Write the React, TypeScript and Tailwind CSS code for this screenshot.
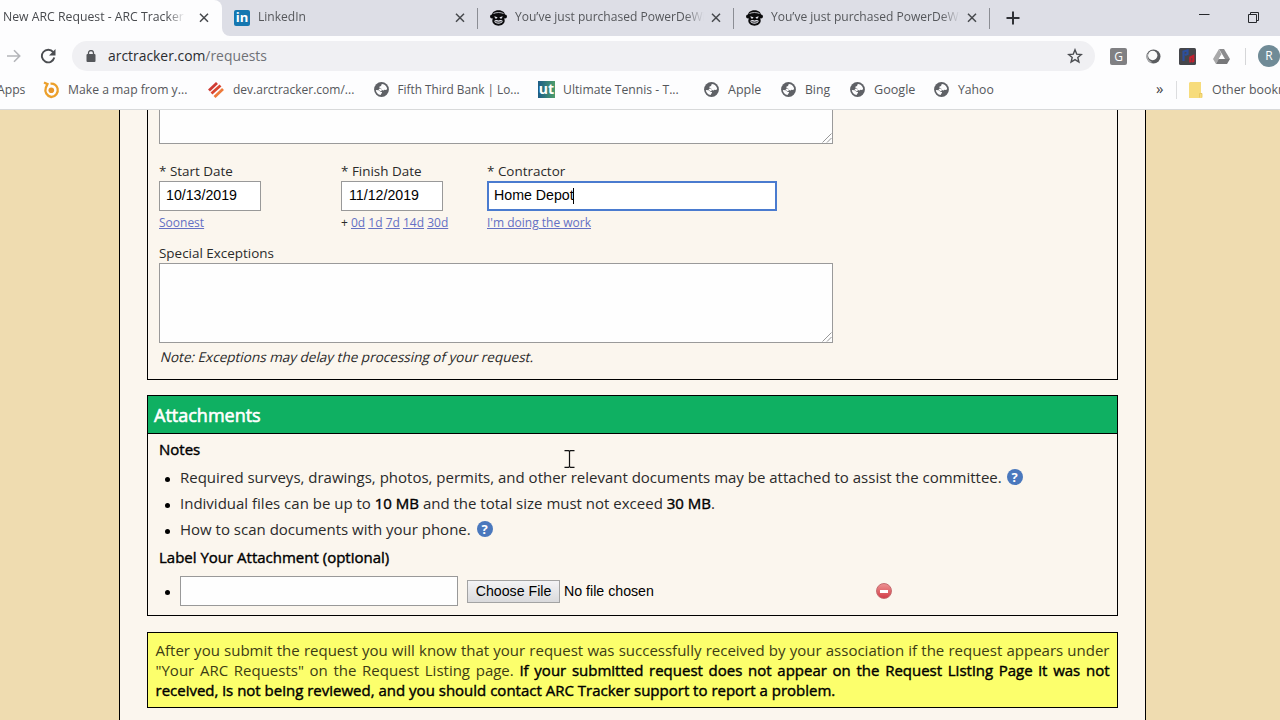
import type { ReactNode } from "react";

function CloseIcon() {
  return (
    <svg className="w-[10px] h-[10px] shrink-0" viewBox="0 0 10 10" fill="none" stroke="#46484c" strokeWidth="1.5" aria-hidden="true">
      <path d="M1 .7l8 8M9 .7L1 8.700" />
    </svg>
  );
}

function MonkeyIcon() {
  return (
    <svg className="w-[17px] h-[16px] shrink-0" viewBox="0 0 17 16" aria-hidden="true">
      <circle cx="2" cy="6.6" r="2" fill="#0b0b0d" />
      <circle cx="15" cy="6.6" r="2" fill="#0b0b0d" />
      <path d="M8.5 0.2C4.2 0.2 1.9 2.6 1.9 5.6c0 1.5.4 2.4.9 3.2-.4.8-.5 1.4-.5 2 0 3 3 4.9 6.2 4.9s6.200-1.900 6.200-4.900c0-.6-.1-1.200-.5-2 .5-.8.900-1.700.900-3.200C15.100 2.600 12.800.2 8.500.2z" fill="#0b0b0d" />
      <path d="M3.500 3.500c3-1.300 7-1.300 10 0" fill="none" stroke="#dddee6" strokeWidth="0.8" />
      <path d="M4.300 6.300l3.200.9-.7 1.300H5.200zM12.700 6.300l-3.200.9.7 1.300h1.600z" fill="#dddee6" />
      <path d="M4.200 11c.8-1.200 2-1.300 2.800-.9l1.500.5 1.500-.5c.8-.4 2-.3 2.800.9-.5 1.700-2.200 2.800-4.300 2.800S4.700 12.700 4.200 11z" fill="#dddee6" />
      <path d="M5.500 11.500c1.800.9 4.200.9 6 0" fill="none" stroke="#0b0b0d" strokeWidth="0.9" />
    </svg>
  );
}

function GlobeIcon() {
  return (
    <svg className="w-[15px] h-[15px] shrink-0" viewBox="0 0 16 16" aria-hidden="true">
      <circle cx="8" cy="8" r="7.900" fill="#5f6166" />
      <path d="M2 8.600l3 .2c1 .1 1.300.6 1.300 1.300l1.900.5c.6.300.5 1-.1 1.400L7 13.900C4.200 13.500 2 11.400 2 8.600z" fill="#fdfdfe" />
      <path d="M8.600 2c3 .2 5.300 2.600 5.400 5.600l-1.500.8-1.500-.2-.6.900-1.900-.5-.7-1.500-2-.7.1-1.500 1.700-.6.2-1.400z" fill="#fdfdfe" />
      <path d="M4.800 8l1.500-1.200 1.800.9.600 1.200-1.700.9z" fill="#fdfdfe" />
    </svg>
  );
}

function HelpIcon() {
  return (
    <span className="w-[16px] h-[16px] mb-[2px] shrink-0 rounded-full bg-[#4a78bd] text-white font-bold text-[13px] leading-[16px] text-center">
      ?
    </span>
  );
}

function Tab({ icon, title, width }: { icon: ReactNode; title: string; width: string }) {
  return (
    <div className={`flex items-center h-[36px] shrink-0 ${width}`}>
      {icon}
      <span className="ml-[8px] w-[189px] h-[36px] overflow-hidden whitespace-nowrap text-[12.05px] leading-[34px] mask-r-from-90% mask-r-to-100%">
        {title}
      </span>
      <span className="ml-auto mr-[12px]">
        <CloseIcon />
      </span>
      <span className="w-px h-[21px] mt-px bg-[#8b8d94]" />
    </div>
  );
}

function Bookmark({ icon, label, box }: { icon: ReactNode; label: string; box: string }) {
  return (
    <div className={`flex items-center shrink-0 whitespace-nowrap ${box}`}>
      {icon}
      <span>{label}</span>
    </div>
  );
}

function Browser() {
  return (
    <header className="h-[110px] bg-[#fdfdfe] border-b border-[#d8d9da] text-[#55575b]">
      {/* Tab strip */}
      <div className="flex h-[36px] bg-white">
        <div className="w-[222px] bg-[#dddee6] shrink-0">
          <div className="flex items-center h-[36px] pl-[3px] bg-[#fdfdfe] rounded-tr-[8px]">
            <span className="w-[182px] h-[36px] overflow-hidden whitespace-nowrap text-[12.25px] leading-[34px] text-[#484a4e] mask-r-from-90% mask-r-to-100%">
              New ARC Request - ARC Tracker |
            </span>
            <span className="ml-[14px]">
              <CloseIcon />
            </span>
          </div>
        </div>
        <div className="bg-[#fdfdfe] flex-1">
          <div className="flex items-center h-[36px] pl-[12px] bg-[#dddee6] rounded-bl-[8px]">
            <Tab
              width="w-[244px]"
              title="LinkedIn"
              icon={
                <span className="w-[16px] h-[16px] bg-[#1577b0] rounded-[2px] text-white font-bold text-[13px] leading-[15px] text-center shrink-0">
                  in
                </span>
              }
            />
            <Tab width="w-[256px] pl-[12px]" title="You’ve just purchased PowerDeWise" icon={<MonkeyIcon />} />
            <Tab width="w-[256px] pl-[12px]" title="You’ve just purchased PowerDeWise" icon={<MonkeyIcon />} />
            <svg className="w-[14px] h-[14px] ml-[16px]" viewBox="0 0 14 14" stroke="#2f3136" strokeWidth="2" aria-hidden="true">
              <path d="M7 .5v13M.5 7h13" />
            </svg>
            <svg className="w-[62px] h-[14px] ml-auto mr-[20px] mb-[3px]" viewBox="0 0 62 14" fill="none" stroke="#26282c" strokeWidth="1" aria-hidden="true">
              <path d="M1 4.500h10.500M50.500 4.500h8v8h-8zM52.500 4.500v-2h8v8h-2" />
            </svg>
          </div>
        </div>
      </div>

      {/* Toolbar */}
      <div className="flex items-center h-[40px] pl-[7px]">
        <svg className="w-[14px] h-[14px] shrink-0" viewBox="0 0 14 14" fill="none" stroke="#b4b5b9" strokeWidth="1.6" aria-hidden="true">
          <path d="M0 7h12.500M7 1.300L12.700 7 7 12.700" />
        </svg>
        <svg className="w-[16px] h-[16px] ml-[19px] shrink-0" viewBox="0 0 16 16" fill="none" aria-hidden="true">
          <path d="M13.200 4.200A6.300 6.300 0 1 0 14.300 9.600" stroke="#4b4d51" strokeWidth="1.900" />
          <path d="M15.500 1v6.500H9z" fill="#4b4d51" />
        </svg>
        <div className="ml-[16px] w-[1023px] h-[30px] shrink-0 flex items-center rounded-full bg-[#f0f0f3] pl-[14px] pr-[12px]">
          <svg className="w-[10px] h-[12px]" viewBox="0 0 10 12" aria-hidden="true">
            <rect x="0.500" y="4" width="9" height="8" rx="1" fill="#55575b" />
            <path d="M2.500 4.500V3a2.500 2.500 0 0 1 5 0v1.500" fill="none" stroke="#55575b" strokeWidth="1.300" />
          </svg>
          <span className="ml-[12px] text-[13.9px] leading-[30px] text-[#6f7176]">
            <span className="text-[#2a2c30]">arctracker.com</span>/requests
          </span>
          <svg className="ml-auto w-[16px] h-[16px]" viewBox="0 0 16 16" fill="none" stroke="#4b4d51" strokeWidth="1.400" aria-hidden="true">
            <path d="M8 1.800l1.700 4.300 4.600.4-3.500 3 1.100 4.500L8 11.600 4.100 14l1.100-4.500-3.500-3 4.600-.4z" />
          </svg>
        </div>
        <span className="ml-[15px] w-[17px] h-[17px] rounded-[2px] bg-[#808083] text-white text-[12px] leading-[17px] text-center shrink-0">
          G
        </span>
        <svg className="ml-[19px] w-[15px] h-[15px] shrink-0" viewBox="0 0 15 15" aria-hidden="true">
          <circle cx="7.500" cy="7.500" r="7" fill="#5a5c5f" />
          <circle cx="6.700" cy="6.500" r="4.700" fill="#fbfbfb" />
          <path d="M1.500 5a6.500 6.500 0 0 0 4 8.500" stroke="#a8a9ab" strokeWidth="1.500" fill="none" />
        </svg>
        <svg className="ml-[18px] w-[17px] h-[17px] shrink-0" viewBox="0 0 17 17" aria-hidden="true">
          <rect width="17" height="17" rx="1.500" fill="#45464b" />
          <path d="M4.500 13V3.500L8.500 2.500v3.500L6 7" fill="none" stroke="#2c4f9e" strokeWidth="2.200" />
          <path d="M11.300 14.500V9.500L14.300 8v5l-1.500.8" fill="none" stroke="#c3202f" strokeWidth="2.200" />
        </svg>
        <svg className="ml-[17px] w-[17px] h-[15px] shrink-0" viewBox="0 0 17 15" aria-hidden="true">
          <path d="M6 0L0 10l3 5 5.500-9.500z" fill="#a9a9aa" />
          <path d="M6 0h5l6 10h-5z" fill="#8c8c8e" />
          <path d="M5.700 10H17l-3 5H3z" fill="#77787a" />
          <path d="M8.500 5.300L5.700 10h5.600z" fill="#fff" />
        </svg>
        <span className="ml-[15px] w-px h-[17px] bg-[#d5d6d8] shrink-0" />
        <span className="ml-[12px] w-[22px] h-[22px] rounded-full bg-[#708b97] text-white text-[12px] leading-[22px] text-center shrink-0">
          R
        </span>
      </div>

      {/* Bookmarks */}
      <div className="flex items-center h-[27px] overflow-hidden text-[12.2px] leading-[27px]">
        <Bookmark box="w-[42px] -ml-[3px] mr-[3px]" label="Apps" icon={null} />
        <Bookmark
          box="w-[166px] gap-[8px]"
          label="Make a map from y..."
          icon={
            <svg className="w-[18px] h-[18px]" viewBox="0 0 18 18" fill="none" aria-hidden="true">
              <path d="M2 1.500l3.500 1.600-1.700 3.700A6.900 6.900 0 0 0 9.200 16 6.900 6.900 0 0 0 15.600 7.500 7 7 0 0 0 8.500 2.600" stroke="#eca02b" strokeWidth="2.300" />
              <circle cx="9.300" cy="9.200" r="2.800" fill="#e8962a" />
            </svg>
          }
        />
        <Bookmark
          box="w-[165.500px] gap-[9px] text-[12.03px]"
          label="dev.arctracker.com/..."
          icon={
            <svg className="w-[16px] h-[16px]" viewBox="0 0 16 16" fill="none" strokeWidth="2.800" aria-hidden="true">
              <path d="M1 8.500L9 1" stroke="#cf3b34" />
              <path d="M3.500 11.500l9-8" stroke="#d9452f" />
              <path d="M6.500 15l8.500-8" stroke="#ee7a3a" />
            </svg>
          }
        />
        <Bookmark box="w-[164.500px] gap-[9px] text-[11.8px]" label="Fifth Third Bank | Lo..." icon={<GlobeIcon />} />
        <Bookmark
          box="w-[166px] gap-[8px]"
          label="Ultimate Tennis - T..."
          icon={
            <span className="w-[17px] h-[17px] bg-linear-to-r from-[#1d5c86] to-[#4f9d68] text-white font-bold text-[14px] leading-[16px] text-center">
              ut
            </span>
          }
        />
        <Bookmark box="w-[77px] gap-[9px] text-[12.5px]" label="Apple" icon={<GlobeIcon />} />
        <Bookmark box="w-[69px] gap-[9px]" label="Bing" icon={<GlobeIcon />} />
        <Bookmark box="w-[84px] gap-[9px] text-[12.6px]" label="Google" icon={<GlobeIcon />} />
        <Bookmark box="w-[222px] gap-[9px]" label="Yahoo" icon={<GlobeIcon />} />
        <span className="w-[20px] shrink-0 text-[15px] leading-[24px] pb-[3px] text-[#3f4145]">»</span>
        <span className="w-px h-[18px] bg-[#dcdddf] shrink-0" />
        <Bookmark
          box="ml-[12px] gap-[9px] text-[12.4px]"
          label="Other bookmarks"
          icon={
            <svg className="w-[14px] h-[16px]" viewBox="0 0 14 16" aria-hidden="true">
              <path d="M1 0h11v11h1v5H0V1z" fill="#f7dc7c" />
              <path d="M10.500 15.500v-4h2.500v4" fill="none" stroke="#e6c45c" strokeWidth="0.800" />
            </svg>
          }
        />
      </div>
    </header>
  );
}

function ResizeGrip() {
  return (
    <svg className="absolute right-0 bottom-0 w-[10px] h-[10px]" viewBox="0 0 10 10" stroke="#8c8c8c" strokeWidth="0.900" aria-hidden="true">
      <path d="M0.500 9.500l9-9M5 9.500l4.500-4.500" />
    </svg>
  );
}

function Bullet() {
  return <span className="w-[5px] h-[5px] mt-[2px] ml-[6px] mr-[10px] rounded-full bg-black shrink-0" />;
}

const link = "underline text-[#6470c4]";
const fauxBold = "text-black [-webkit-text-stroke:0.4px_black]";

export default function App() {
  return (
    <div className="relative w-[1280px] h-[720px] overflow-hidden bg-[#efdcb0] font-['Open_Sans','Noto_Sans',sans-serif] text-[15px] text-[#2a2a2a]">
      <Browser />

      <main className="ml-[119px] w-[1027px] h-[610px] px-[27px] bg-[#fbf6ee] border-x border-black">
        {/* Request details */}
        <section className="h-[270px] pl-[11px] border border-t-0 border-black text-[13.45px]">
          <div className="relative w-[674px] h-[34px] bg-[#fefefe] border border-t-0 border-[#9a9a9a]">
            <ResizeGrip />
          </div>

          <div className="flex pt-[16px]">
            <div className="w-[182px]">
              <div className="h-[21px] leading-[23px]">* Start Date</div>
              <div className="w-[102px] h-[30px] pl-[6px] bg-white border border-[#999] font-['Liberation_Sans',sans-serif] text-[14.2px] leading-[27px] text-black">
                10/13/2019
              </div>
              <div className="h-[22px] text-[12px] leading-[24px]">
                <a className={link}>Soonest</a>
              </div>
            </div>
            <div className="w-[146px]">
              <div className="h-[21px] leading-[23px]">* Finish Date</div>
              <div className="w-[102px] h-[30px] pl-[7px] bg-white border border-[#999] font-['Liberation_Sans',sans-serif] text-[14.2px] leading-[27px] text-black">
                11/12/2019
              </div>
              <div className="h-[22px] text-[12px] leading-[24px]">
                + <a className={link}>0d</a> <a className={link}>1d</a> <a className={link}>7d</a>{" "}
                <a className={link}>14d</a> <a className={link}>30d</a>
              </div>
            </div>
            <div>
              <div className="h-[21px] leading-[23px]">* Contractor</div>
              <div className="flex w-[290px] h-[30px] pl-[5px] bg-white border-2 border-[#4a7bcf] font-['Liberation_Sans',sans-serif] text-[14.2px] leading-[25px] text-black">
                Home Depot
                <span className="w-px h-[16px] mt-[5px] -ml-px bg-black" />
              </div>
              <div className="h-[22px] text-[12px] leading-[24px]">
                <a className={link}>I'm doing the work</a>
              </div>
            </div>
          </div>

          <div className="h-[21px] mt-[9px] leading-[23px]">Special Exceptions</div>
          <div className="relative w-[674px] h-[80px] bg-[#fefefe] border border-[#9a9a9a]">
            <ResizeGrip />
          </div>
          <div className="h-[28px] pl-[1.5px] text-[13.54px] leading-[28px]">
            <span className="inline-block skew-x-[-14deg]">Note: Exceptions may delay the processing of your request.</span>
          </div>
        </section>

        {/* Attachments */}
        <section className="mt-[15px] h-[221px] border border-black">
          <h2 className="h-[38px] pl-[6px] bg-[#0fb062] border-b border-black text-[18px] leading-[39px] text-white [-webkit-text-stroke:0.600px_white]">
            Attachments
          </h2>
          <div className="pl-[11px]">
            <h3 className={`h-[31px] leading-[31px] ${fauxBold}`}>Notes</h3>
            <ul>
              <li className="flex items-center h-[26px] leading-[24px]">
                <Bullet />
                <span className="mr-[5px] h-[26px]">
                  Required surveys, drawings, photos, permits, and other relevant documents may be attached to assist the committee.
                </span>
                <HelpIcon />
              </li>
              <li className="flex items-center h-[26px] leading-[24px]">
                <Bullet />
                <span className="h-[26px]">
                  Individual files can be up to <b className={`font-normal ${fauxBold}`}>10 MB</b> and the total size must not exceed{" "}
                  <b className={`font-normal ${fauxBold}`}>30 MB</b>.
                </span>
              </li>
              <li className="flex items-center h-[26px] leading-[24px]">
                <Bullet />
                <span className="mr-[6px] h-[26px]">How to scan documents with your phone.</span>
                <HelpIcon />
              </li>
            </ul>
            <h3 className={`h-[33px] leading-[29px] ${fauxBold}`}>Label Your Attachment (optional)</h3>
            <div className="flex items-center h-[30px] font-['Liberation_Sans',sans-serif] text-[14.2px] text-black">
              <Bullet />
              <div className="w-[278px] h-[30px] bg-[#fefefe] border border-[#999]" />
              <button className="ml-[9px] w-[93px] h-[23px] border border-[#a3a3a3] bg-linear-to-b from-[#f3f3f5] to-[#dadadc] leading-[20px]">
                Choose File
              </button>
              <span className="ml-[4px] leading-[28px]">No file chosen</span>
              <span className="ml-[222px] flex items-center justify-center w-[16px] h-[16px] rounded-full border border-[#c46a6e] bg-linear-to-b from-[#ec8f90] to-[#d23c4a]">
                <span className="w-[8px] h-[3px] bg-white" />
              </span>
            </div>
          </div>
        </section>

        {/* Submission notice */}
        <p className="mt-[16px] h-[76px] px-[7.5px] pt-[6.500px] border border-black bg-[#fcff6c] text-justify leading-[20.2px] text-[#3c3c14]">
          After you submit the request you will know that your request was successfully received by your association if the request appears under
          "Your ARC Requests" on the Request Listing page.{" "}
          <b className={`font-normal ${fauxBold}`}>
            If your submitted request does not appear on the Request Listing Page it was not received, is not being reviewed, and you should
            contact ARC Tracker support to report a problem.
          </b>
        </p>
      </main>

      {/* Text cursor */}
      <svg className="absolute left-[564px] top-[450px] w-[11px] h-[18px]" viewBox="0 0 11 18" fill="none" stroke="#111" strokeWidth="1.200" aria-hidden="true">
        <path d="M0.500 .6H4.500L5.500 1.500 6.500 .6H10.500M5.500 1.500v15M0.500 17.400H4.500L5.500 16.500l1 .9H10.500" />
      </svg>
    </div>
  );
}
